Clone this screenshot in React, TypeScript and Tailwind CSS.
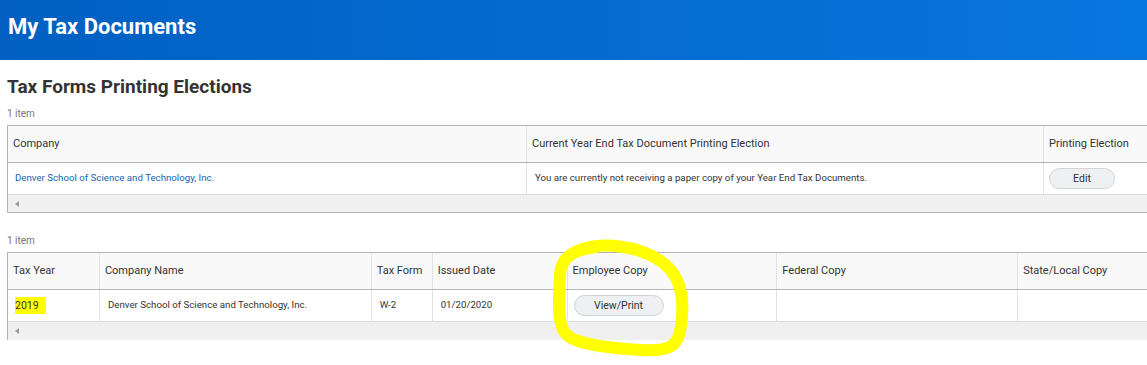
import React from "react";

const font = { fontFamily: "Roboto, 'Liberation Sans', Arial, sans-serif" };

function ScrollRow({ bottom }: { bottom?: boolean }) {
  return (
    <div className={`flex h-[18px] items-center bg-[#f0f0f0] pl-[7px] ${bottom ? "border-b border-[#b4b4b4]" : ""}`}>
      <span className="block h-0 w-0 border-y-[3px] border-r-[4px] border-y-transparent border-r-[#9a9a9a]" />
    </div>
  );
}

function Btn({ label, w }: { label: string; w: string }) {
  return (
    <button className={`${w} h-[21px] rounded-full border border-[#cfd4d9] bg-[#eef0f2] text-[10.5px] text-[#333]`}>
      {label}
    </button>
  );
}

export default function App() {
  const taxCols = [
    { label: "Tax Year", w: "w-[92px]" },
    { label: "Company Name", w: "w-[272px]" },
    { label: "Tax Form", w: "w-[61px]" },
    { label: "Issued Date", w: "w-[135px]" },
    { label: "Employee Copy", w: "w-[210px]" },
    { label: "Federal Copy", w: "w-[241px]" },
    { label: "State/Local Copy", w: "w-[160px]" },
  ];

  return (
    <div className="relative h-[365px] w-[1147px] overflow-hidden bg-white text-[#333]" style={font}>
      <div className="flex h-[60px] items-center bg-gradient-to-r from-[#0160c2] to-[#0876df] pl-[8px] pb-[7px]">
        <h1 className="text-[22px] font-bold text-white">My Tax Documents</h1>
      </div>

      <h2 className="mt-[15px] pl-[7px] text-[19px] font-bold leading-[24px] text-[#333]">Tax Forms Printing Elections</h2>
      <p className="mt-[8px] pl-[7px] text-[10px] leading-[14px] text-[#777]">1 item</p>

      <div className="ml-[7px] mt-[4px] w-[1160px] border-l border-t border-[#b4b4b4] text-[11px]">
        <div className="flex h-[37px] border-b border-[#b4b4b4] bg-[#f9f9f9]">
          <div className="flex w-[519px] items-center border-r border-[#e2e2e2] pl-[5px]">Company</div>
          <div className="flex w-[517px] items-center border-r border-[#e2e2e2] pl-[5px]">Current Year End Tax Document Printing Election</div>
          <div className="flex w-[120px] items-center pl-[5px]">Printing Election</div>
        </div>
        <div className="flex h-[32px] border-b border-[#dcdcdc] text-[9.7px]">
          <div className="flex w-[519px] items-center border-r border-[#e2e2e2] pl-[7px] text-[#1a5fb4]">Denver School of Science and Technology, Inc.</div>
          <div className="flex w-[517px] items-center border-r border-[#e2e2e2] pl-[8px]">You are currently not receiving a paper copy of your Year End Tax Documents.</div>
          <div className="flex w-[120px] items-center pl-[5px]">
            <Btn label="Edit" w="w-[66px]" />
          </div>
        </div>
        <ScrollRow bottom />
      </div>

      <p className="mt-[21px] pl-[7px] text-[10px] leading-[14px] text-[#777]">1 item</p>

      <div className="ml-[7px] mt-[4px] w-[1171px] border-l border-t border-[#b4b4b4] text-[11px]">
        <div className="flex h-[37px] border-b border-[#b4b4b4] bg-[#f9f9f9]">
          {taxCols.map((c, i) => (
            <div
              key={c.label}
              className={`flex ${c.w} items-center pl-[5px] ${i < taxCols.length - 1 ? "border-r border-[#e2e2e2]" : ""}`}
            >
              {c.label}
            </div>
          ))}
        </div>
        <div className="flex h-[32px] border-b border-[#dcdcdc] text-[9.7px]">
          <div className="flex w-[92px] items-center border-r border-[#e2e2e2] pl-[7px]">
            <span className="bg-[#ffff00] py-[1px] pr-[7px] text-[10.5px]">2019</span>
          </div>
          <div className="flex w-[272px] items-center border-r border-[#e2e2e2] pl-[8px]">Denver School of Science and Technology, Inc.</div>
          <div className="flex w-[61px] items-center border-r border-[#e2e2e2] pl-[8px]">W-2</div>
          <div className="flex w-[135px] items-center border-r border-[#e2e2e2] pl-[8px]">01/20/2020</div>
          <div className="flex w-[210px] items-center border-r border-[#e2e2e2] pl-[6px]">
            <Btn label="View/Print" w="w-[90px]" />
          </div>
          <div className="w-[241px] border-r border-[#e2e2e2]" />
          <div className="w-[160px]" />
        </div>
        <ScrollRow />
      </div>

      <svg className="pointer-events-none absolute left-0 top-0" width="1147" height="365">
        <path
          d="M 575 252 C 600 240, 640 246, 662 262 C 684 278, 684 305, 681 325 C 679 345, 672 352, 640 350 C 610 348, 580 345, 568 336 C 556 326, 559 300, 560 275 C 561 258, 572 250, 596 247"
          fill="none"
          stroke="#ffff00"
          strokeWidth="12"
          strokeLinecap="round"
          strokeLinejoin="round"
        />
      </svg>
    </div>
  );
}
